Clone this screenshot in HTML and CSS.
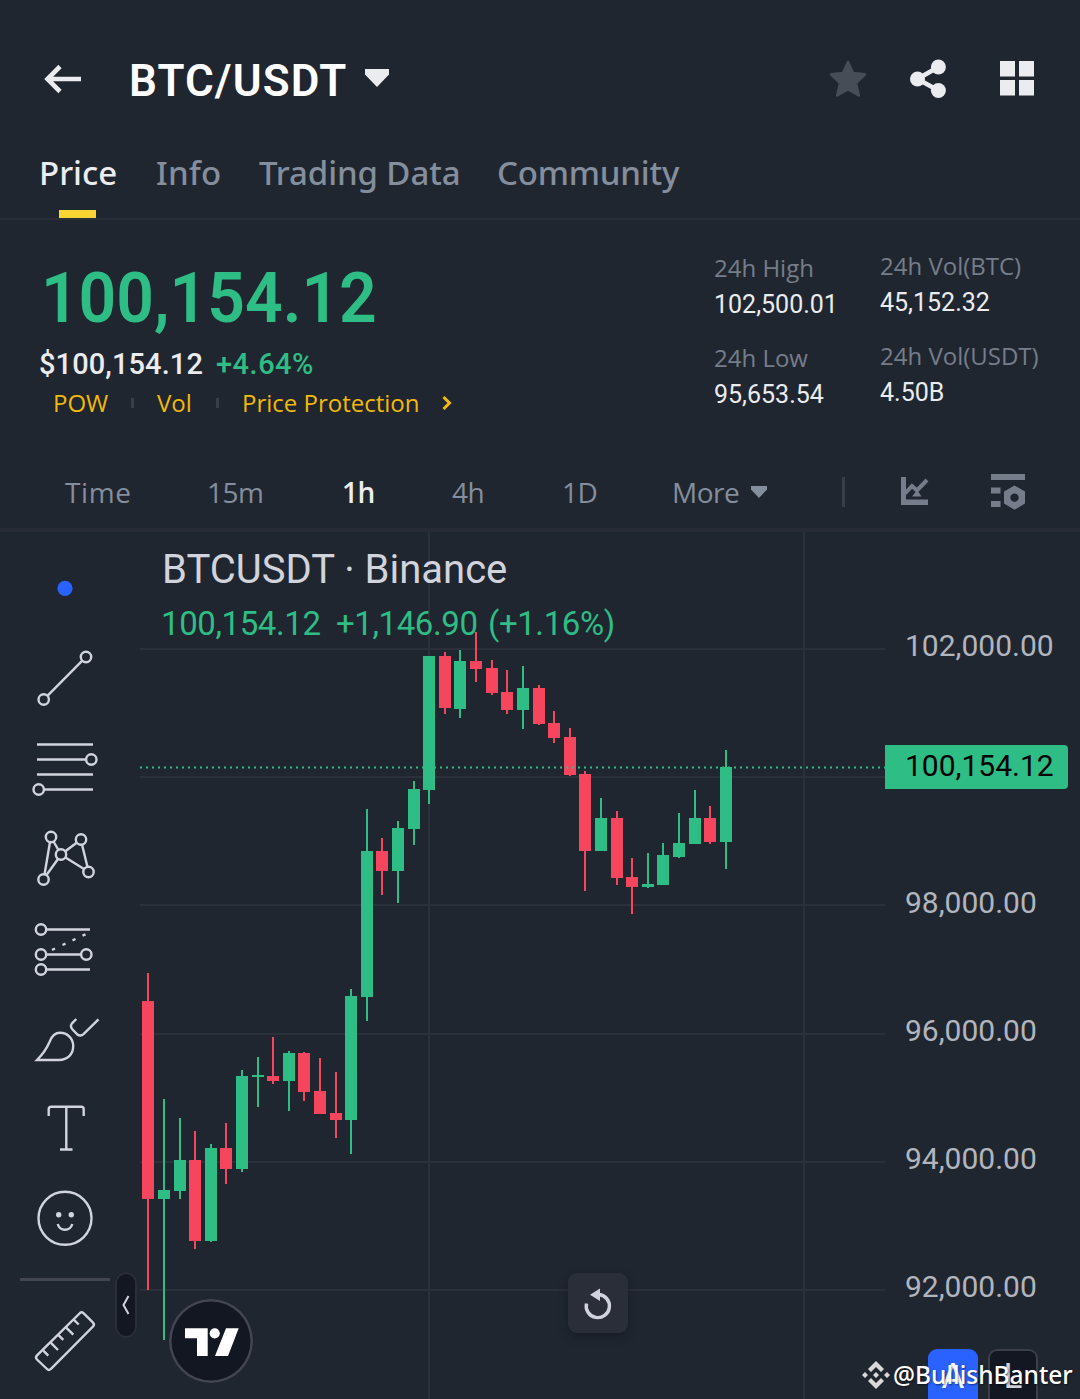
FILE: index.html
```
<!DOCTYPE html>
<html lang="en">

<head>
    <meta charset="UTF-8">
    <meta name="viewport" content="width=device-width, initial-scale=1.0">
    <title>BTC/USDT</title>
    <link rel="stylesheet" href="styles.css">
</head>

<body>

    <header class="topbar">
        <svg class="back" width="38" height="30" viewBox="0 0 38 30">
            <path d="M17 2.5 L4.5 15 L17 27.5 M4.5 15 H38" fill="none" stroke="#eaecef" stroke-width="4.6"/>
        </svg>
        <h1>BTC/USDT</h1>
        <svg class="caret" width="24" height="18" viewBox="0 0 24 18"><path d="M0 0H24V5.5L12 18L0 5.5Z" fill="#eaecef"/></svg>
        <div class="actions">
            <svg width="38" height="40" viewBox="0 0 38 40">
                <path d="M19 3 L24 14 L36 15.300 L27 24 L29.800 36.500 L19 30.500 L8.200 36.500 L11 24 L2 15.300 L14 14 Z" fill="#474d57" stroke="#474d57" stroke-width="2.500" stroke-linejoin="round"/>
            </svg>
            <svg width="38" height="40" viewBox="0 0 38 40">
                <path d="M29.400 8 L8.500 20 L29.400 31.500" fill="none" stroke="#eaecef" stroke-width="4.600"/>
                <circle cx="29.400" cy="8" r="7.500" fill="#eaecef"/>
                <circle cx="8.500" cy="20" r="7.500" fill="#eaecef"/>
                <circle cx="29.400" cy="31.500" r="7.500" fill="#eaecef"/>
            </svg>
            <svg width="34" height="35" viewBox="0 0 34 35">
                <path d="M0 0H15V15.500H0ZM19 0H34V15.500H19ZM0 19H15V34.500H0ZM19 19H34V34.500H19Z" fill="#eaecef"/>
            </svg>
        </div>
    </header>

    <nav class="tabs">
        <a class="tab active tab-price">Price</a>
        <a class="tab tab-info">Info</a>
        <a class="tab tab-data">Trading Data</a>
        <a class="tab tab-community">Community</a>
    </nav>

    <section class="summary">
        <div class="price-block">
            <div class="last-price">100,154.12</div>
            <div class="fiat-row"><span class="fiat">$100,154.12</span><span class="change">+4.64%</span></div>
            <div class="tags">
                <span class="tag tag-pow">POW</span>
                <span class="tag tag-vol">Vol</span>
                <span class="tag tag-protect">Price Protection</span>
                <svg width="10" height="14" viewBox="0 0 10 14"><path d="M1.500 1 L7.500 7 L1.500 13" fill="none" stroke="#f0b90b" stroke-width="3"/></svg>
            </div>
        </div>
        <dl class="stats stats-price">
            <dt>24h High</dt>
            <dd>102,500.01</dd>
            <dt>24h Low</dt>
            <dd>95,653.54</dd>
        </dl>
        <dl class="stats stats-vol">
            <dt>24h Vol(BTC)</dt>
            <dd>45,152.32</dd>
            <dt>24h Vol(USDT)</dt>
            <dd>4.50B</dd>
        </dl>
    </section>

    <div class="intervals">
        <span class="int-time">Time</span>
        <span>15m</span>
        <span class="selected">1h</span>
        <span>4h</span>
        <span>1D</span>
        <span class="more">More</span>
        <svg width="16" height="12" viewBox="0 0 16 12"><path d="M0 0H16V3.500L8 12L0 3.500Z" fill="#848e9c"/></svg>
        <i class="divider"></i>
        <svg width="28" height="28" viewBox="0 0 28 28">
            <path d="M0 0H5V22.500H27V28H0Z" fill="#767d8a"/>
            <path d="M4 16.500 L11 9 L16 13.500 L26 3" fill="none" stroke="#767d8a" stroke-width="4"/>
            <path d="M15.500 12.500 L17.500 15 L20.500 19.500 H11 L14.500 15Z" fill="#767d8a"/>
        </svg>
        <svg width="35" height="36" viewBox="0 0 35 36">
            <path d="M0 0H34V6H0ZM0 13.500H9.500V19.500H0ZM0 27H9.500V33H0Z" fill="#767d8a"/>
            <path fill-rule="evenodd" d="M23.500 11.500 L34 17.500 V29.500 L23.500 35.800 L13 29.500 V17.500ZM23.500 19.400a4.200 4.200 0 1 0 .01 0Z" fill="#767d8a"/>
        </svg>
    </div>

    <main class="chart">
        <aside class="tools">
            <svg viewBox="0 0 90 90"><circle class="dot" cx="45" cy="45.300" r="7.600"/></svg>
            <svg viewBox="0 0 90 90">
                <path d="M27.400 62.800 L62.300 27.700"/>
                <circle cx="23.700" cy="66.500" r="5.200"/><circle cx="66" cy="24" r="5.200"/>
            </svg>
            <svg viewBox="0 0 90 90">
                <path d="M17 21.500H73M17 36.500H66M17 51.500H73M24 66.500H73"/>
                <circle cx="71.300" cy="36.500" r="5.200"/><circle cx="18.700" cy="66.500" r="5.200"/>
            </svg>
            <svg viewBox="0 0 90 90">
                <path d="M30 29 L24.500 61.500M33.500 28.500 L38.500 37M38 46 L26.500 62M45 38.500 L57 29.500M62 31.500 L67.500 54M45.500 44.500 L64 56"/>
                <circle cx="31" cy="24" r="5.200"/><circle cx="61" cy="26.500" r="5.200"/><circle cx="41" cy="41.500" r="5.200"/>
                <circle cx="23.500" cy="66.500" r="5.200"/><circle cx="68.500" cy="59" r="5.200"/>
            </svg>
            <svg viewBox="0 0 90 90">
                <path d="M26 26.500H70M26 51.500H61M26 66.500H70"/>
                <path d="M32 47 L35 45.500M42.500 42 L45.500 40.700M52.500 37.300 L55.500 36M62.500 32.700 L65.500 31.400"/>
                <circle cx="21" cy="26.500" r="5.200"/><circle cx="21" cy="51.500" r="5.200"/>
                <circle cx="66.300" cy="51.500" r="5.200"/><circle cx="21" cy="66.500" r="5.200"/>
            </svg>
            <svg viewBox="0 0 90 90">
                <path d="M17 67 C23 61 27 55 29.500 49 C32 42.500 35 39.800 40 39.800 C47.500 39.800 53.200 45.500 53.200 53 C53.200 61.500 47.500 67 39 67 Z"/>
                <path d="M56.300 26 L52.500 29.800 C50.500 32 50.500 34.500 52.500 36.500 L57 41.200 C59.500 43 61.500 43 63.500 41.200 L78.500 26.300"/>
            </svg>
            <svg viewBox="0 0 90 90">
                <path d="M28.700 33V26.200Q28.700 23.700 31.200 23.700H61.200Q63.700 23.700 63.700 26.200V33M46.300 24V66.500M40 66.500H52.500"/>
            </svg>
            <svg viewBox="0 0 90 90">
                <circle cx="45" cy="45.300" r="26.500"/>
                <circle class="eye" cx="38.700" cy="41.700" r="2.700"/><circle class="eye" cx="51.300" cy="41.700" r="2.700"/>
                <path d="M37.700 51 C40 58.700 50 58.700 52.300 51"/>
            </svg>
            <hr>
            <svg viewBox="0 0 90 90">
                <path d="M59.500 17.500 Q61.300 15.200 63.500 17.200 L72.800 26.300 Q75 28.300 73 30.500 L31 72.800 Q29 75 27 73 L17 63.500 Q15 61.300 17 59.300 Z"/>
                <path d="M23.300 54.700 L28.300 59.700M30.700 46.700 L38 54M38 38.700 L43.300 43.900M46 31.300 L53.300 38.700M53.700 23.700 L58.700 28.500"/>
            </svg>
        </aside>

        <div class="plot">
            <svg id="candles" width="745" height="867" viewBox="140 532 745 867"></svg>
            <div class="legend">
                <div class="symbol">BTCUSDT · Binance</div>
                <div class="quote"><span class="q-last">100,154.12</span><span class="q-diff">+1,146.90</span><span class="q-pct">(+1.16%)</span></div>
            </div>
            <div class="reset">
                <svg width="60" height="60" viewBox="0 0 60 60">
                    <path d="M18.500 30.500 A11.600 11.600 0 1 0 31 21.500" fill="none" stroke="#d1d4dc" stroke-width="3.400"/>
                    <path d="M22 21.700 L32 15.500 V28Z" fill="#d1d4dc"/>
                </svg>
            </div>
            <div class="tv-logo">
                <svg width="84" height="84" viewBox="0 0 84 84">
                    <path d="M16 29.300H38.700V57H28V39.300H16Z M57 29.300H69.700L59 57H46Z" fill="#fff"/>
                    <circle cx="45.700" cy="34.300" r="5.100" fill="#fff"/>
                </svg>
            </div>
            <div class="collapse">
                <svg width="8" height="20" viewBox="0 0 8 20"><path d="M6.500 1 L1.500 10 L6.500 19" fill="none" stroke="#d1d4dc" stroke-width="2"/></svg>
            </div>
        </div>

        <aside class="axis">
            <span>102,000.00</span>
            <span></span>
            <span>98,000.00</span>
            <span>96,000.00</span>
            <span>94,000.00</span>
            <span>92,000.00</span>
            <div class="price-tag">100,154.12</div>
            <div class="scale-btn auto">A</div>
            <div class="scale-btn log">L</div>
            <div class="watermark">
                <svg width="28" height="28" viewBox="0 0 28 28">
                    <path d="M14 0 L22 8 L19 11 L14 6 L9 11 L6 8ZM14 28 L22 20 L19 17 L14 22 L9 17 L6 20ZM3 11 L6 14 L3 17 L0 14ZM25 11 L28 14 L25 17 L22 14ZM14 11 L17 14 L14 17 L11 14Z" fill="#d9d9d9"/>
                </svg>
                <span>@BullishBanter</span>
            </div>
        </aside>
    </main>

    <script src="script.js"></script>

</body>

</html>
```
FILE: styles.css
```
* {
    box-sizing: border-box;
}

body {
    margin: 0;
    height: 1399px;
    overflow: hidden;
    background-color: #202630;
    color: #eaecef;
    font-family: "Open Sans", sans-serif;
    white-space: nowrap;
}

svg {
    display: block;
    flex: none;
}

/* Header */
.topbar {
    display: flex;
    align-items: center;
    height: 158px;
    padding: 0 46px 0 43px;
}

.topbar h1 {
    width: 235px;
    margin: 3px 0 0 46px;
    padding-left: 2px;
    font: 600 44px/60px Roboto, sans-serif;
    letter-spacing: 1.1px;
    color: #fff;
}

.caret {
    margin: -2px 0 0 3px;
}

.actions {
    display: flex;
    align-items: center;
    margin: -1px 0 0 auto;
}

.actions svg:nth-child(2) {
    margin-left: 42px;
}

.actions svg:nth-child(3) {
    margin-left: 53px;
}

.tabs {
    display: flex;
    height: 62px;
    padding-left: 39px;
    border-bottom: 2px solid #292e39;
    font-family: "Noto Sans", sans-serif;
    font-size: 33px;
    font-weight: 500;
    line-height: 30px;
    color: #848e9c;
}

.tab {
    position: relative;
}

.tab-price {
    width: 117px;
}

.tab-info {
    width: 103px;
    letter-spacing: 0.3px;
}

.tab-data {
    width: 238px;
    letter-spacing: -0.1px;
}

.tab-community {
    letter-spacing: -0.2px;
}

.tab.active {
    color: #eaecef;
}

.tab.active::after {
    content: "";
    position: absolute;
    left: 20px;
    bottom: 0;
    width: 37px;
    height: 8px;
    background-color: #fcd535;
}

/* Price summary */
.summary {
    display: flex;
    height: 230px;
    padding: 30px 0 0 39px;
}

.price-block {
    width: 675px;
    padding-top: 11px;
}

.last-price {
    padding-left: 2px;
    font: 600 70px/74px Roboto, sans-serif;
    color: #2ebd85;
    transform: scaleX(0.943);
    transform-origin: left;
}

.fiat-row {
    display: flex;
    margin-top: 11px;
    font: 500 29px/37px Roboto, sans-serif;
}

.fiat {
    width: 177px;
    letter-spacing: 0.1px;
}

.change {
    letter-spacing: 0.5px;
    color: #2ebd85;
}

.tags {
    display: flex;
    align-items: center;
    padding-left: 14px;
    font-size: 24px;
    line-height: 40px;
    color: #f0b90b;
}

.tag-pow,
.tag-vol {
    display: flex;
    align-items: center;
    justify-content: space-between;
}

.tag-pow::after,
.tag-vol::after {
    content: "";
    width: 3px;
    height: 10px;
    background-color: #373d49;
}

.tag-pow {
    width: 81px;
    margin-right: 23px;
}

.tag-vol {
    width: 62px;
    margin-right: 23px;
}

.tag-protect {
    width: 200px;
}

.stats {
    margin: 0;
    line-height: 36px;
}

.stats-price {
    width: 166px;
}

.stats-vol {
    margin-top: -2px;
}

.stats dt {
    font-size: 24px;
    color: #767d8a;
}

.stats dd {
    margin: 0 0 17px;
    padding-top: 1px;
    font-family: Roboto, sans-serif;
    font-size: 25px;
}

/* Interval selector */
.intervals {
    display: flex;
    align-items: center;
    height: 78px;
    padding: 5px 0 0 65px;
    font-size: 28px;
    color: #848e9c;
}

.intervals span {
    width: 110px;
    letter-spacing: -0.5px;
}

.intervals .int-time {
    width: 142px;
    letter-spacing: 0.6px;
}

.intervals .selected {
    color: #eaecef;
    font-weight: 600;
}

.intervals span:nth-child(2) {
    width: 135px;
}

.intervals .more {
    width: 79px;
}

.divider {
    width: 3px;
    height: 30px;
    margin: 0 56px 0 75px;
    background-color: #373d49;
}

.intervals .divider + svg {
    margin: -1px 62px 0 0;
}

/* Chart */
.chart {
    display: flex;
    height: 871px;
    border-top: 4px solid #262b36;
    font-family: Roboto, sans-serif;
}

.tools {
    width: 140px;
    padding: 11px 0 0 20px;
}

.tools svg {
    width: 90px;
    height: 90px;
    fill: none;
    stroke: #d1d4dc;
    stroke-width: 2.4;
}

.tools .dot {
    fill: #2962ff;
    stroke: none;
}

.tools .eye {
    fill: #d1d4dc;
    stroke: none;
}

.tools hr {
    width: 90px;
    height: 3px;
    margin: 15px 0;
    border: 0;
    background-color: #434651;
}

.plot {
    position: relative;
    width: 745px;
}

.legend {
    position: absolute;
    top: 13px;
    left: 22px;
}

.symbol {
    font-size: 40px;
    line-height: 50px;
    color: #d1d4dc;
}

.quote {
    display: flex;
    margin: 7px 0 0 -1px;
    font-size: 33px;
    line-height: 44px;
    letter-spacing: -0.4px;
    color: #2ebd85;
}

.q-last {
    width: 175px;
}

.q-diff {
    width: 152px;
}

.reset {
    position: absolute;
    top: 741px;
    left: 428px;
    border-radius: 9px;
    background-color: #2a2e39;
    box-shadow: 0 4px 8px rgba(16, 20, 28, 0.5);
}

.tv-logo {
    position: absolute;
    top: 767px;
    left: 29px;
    border-radius: 50%;
    background-color: #131722;
    box-shadow: inset 0 0 0 2.5px #434651;
}

.collapse {
    position: absolute;
    top: 740px;
    left: -25px;
    display: flex;
    align-items: center;
    justify-content: center;
    width: 22px;
    height: 66px;
    border-radius: 11px;
    background-color: #131722;
    box-shadow: inset 0 0 0 2px #2a2e39;
}

.axis {
    position: relative;
    width: 195px;
    padding: 49px 0 0 20px;
    font-size: 30px;
    color: #b2b5be;
}

.axis > span {
    display: block;
    height: 128.3px;
    line-height: 129px;
}

.price-tag {
    position: absolute;
    top: 213px;
    left: 0;
    width: 183px;
    height: 44px;
    padding-left: 20px;
    border-radius: 0 4px 4px 0;
    background-color: #2ebd85;
    color: #000;
    line-height: 41px;
}

.scale-btn {
    position: absolute;
    top: 817px;
    width: 50px;
    height: 62px;
    border-radius: 9px;
    font-size: 35px;
    line-height: 55px;
    text-align: center;
}

.auto {
    left: 43px;
    background-color: #2962ff;
    color: #fff;
}

.log {
    left: 103px;
    background-color: #131722;
    box-shadow: inset 0 0 0 2px #3b3f4a;
    color: #d1d4dc;
}

.watermark {
    position: absolute;
    top: 825px;
    left: -23px;
    display: flex;
    align-items: center;
    gap: 3px;
    height: 36px;
    font: 500 24.5px/34px "Noto Sans", sans-serif;
    color: #fff;
    text-shadow: 1px 1px 2px rgba(0, 0, 0, 0.5);
}
```
FILE: script.js
```
// [center x, high, low, body top, body bottom, rising]
const candles = [
    [148, 973, 1290, 1001, 1199, 0],
    [164, 1099, 1340, 1190, 1199, 1],
    [180, 1118, 1199, 1160, 1191, 1],
    [195, 1131, 1249, 1160, 1241, 0],
    [211, 1144, 1242, 1148, 1241, 1],
    [226, 1123, 1184, 1148, 1169, 0],
    [242, 1070, 1172, 1076, 1169, 1],
    [258, 1057, 1107, 1075, 1077, 1],
    [273, 1037, 1084, 1076, 1081, 0],
    [289, 1051, 1111, 1053, 1081, 1],
    [304, 1052, 1101, 1053, 1092, 0],
    [320, 1058, 1114, 1091, 1114, 0],
    [336, 1072, 1138, 1113, 1120, 0],
    [351, 989, 1154, 996, 1120, 1],
    [367, 809, 1021, 851, 997, 1],
    [382, 838, 895, 851, 871, 0],
    [398, 821, 903, 828, 871, 1],
    [414, 781, 845, 789, 829, 1],
    [429, 656, 804, 656, 790, 1],
    [445, 652, 714, 656, 708, 0],
    [460, 650, 718, 661, 709, 1],
    [476, 632, 682, 661, 669, 0],
    [492, 660, 695, 668, 693, 0],
    [507, 670, 714, 692, 710, 0],
    [523, 666, 729, 688, 710, 1],
    [539, 685, 725, 688, 724, 0],
    [554, 711, 743, 723, 738, 0],
    [570, 728, 776, 737, 775, 0],
    [585, 771, 891, 774, 851, 0],
    [601, 798, 851, 818, 851, 1],
    [617, 811, 885, 818, 878, 0],
    [632, 858, 914, 877, 887, 0],
    [648, 853, 888, 884, 887, 1],
    [663, 843, 885, 855, 885, 1],
    [679, 813, 858, 843, 857, 1],
    [695, 790, 844, 818, 844, 1],
    [710, 806, 844, 818, 842, 0],
    [726, 750, 869, 767, 842, 1]
];

const svg = document.getElementById('candles');

function addRect(x, y, width, height, fill) {
    const rect = document.createElementNS('http://www.w3.org/2000/svg', 'rect');
    rect.setAttribute('x', x);
    rect.setAttribute('y', y);
    rect.setAttribute('width', width);
    rect.setAttribute('height', height);
    rect.setAttribute('fill', fill);
    svg.appendChild(rect);
}

// Grid lines
[648, 776, 904, 1033, 1161, 1289].forEach(y => addRect(140, y, 745, 2, '#2b303a'));
[428, 803].forEach(x => addRect(x, 532, 2, 867, '#2b303a'));

// Candles
candles.forEach(([x, high, low, top, bottom, rising]) => {
    const color = rising ? '#2ebd85' : '#f6465d';
    addRect(x - 1, high, 2, low - high, color);
    addRect(x - 6, top, 12, bottom - top, color);
});

// Last price line
for (let x = 140; x < 885; x += 6) {
    addRect(x, 766.5, 2, 2, '#2ebd85');
}
```
